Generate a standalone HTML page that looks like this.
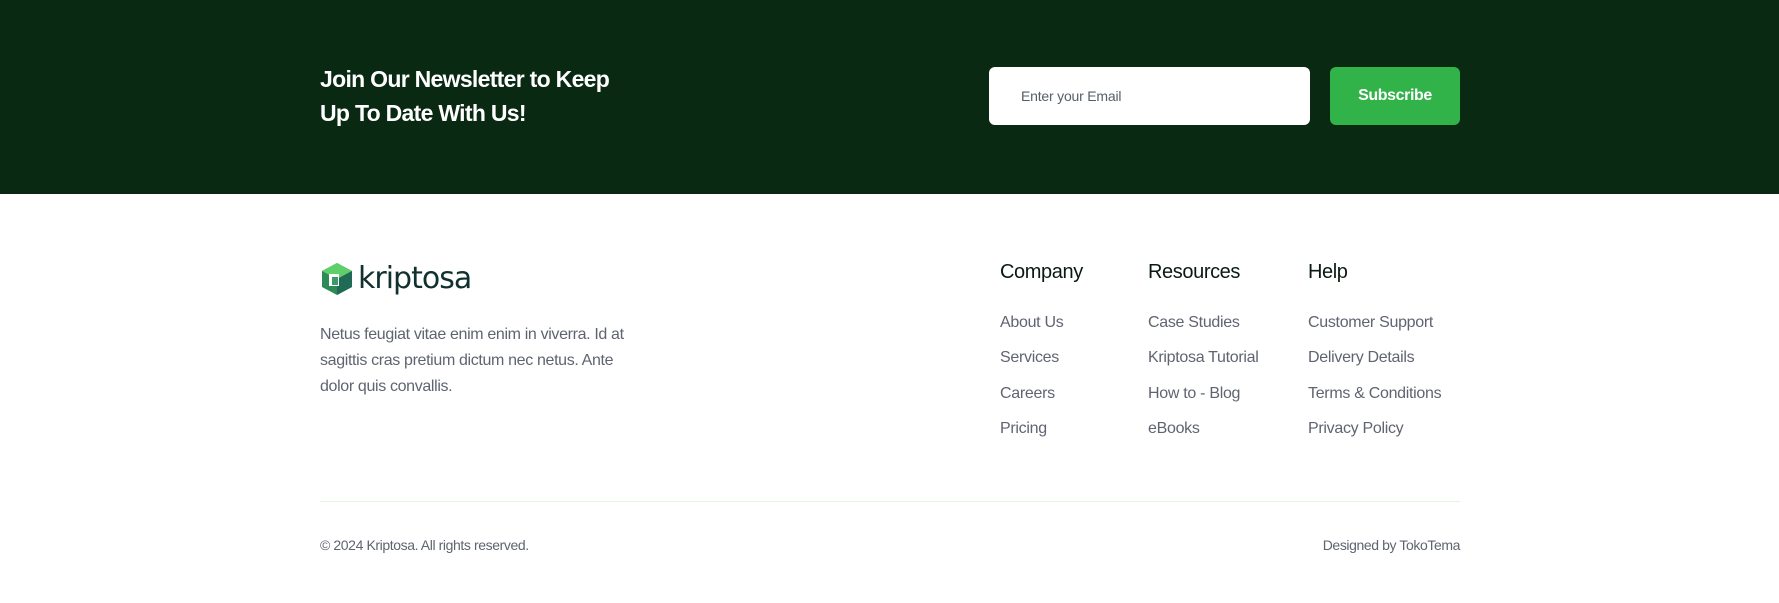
<!DOCTYPE html>
<html><head><meta charset="utf-8"><style>
*{margin:0;padding:0;box-sizing:border-box}
body{width:1779px;height:603px;background:#fff;font-family:"Liberation Sans",sans-serif;position:relative;overflow:hidden}
.band{position:absolute;left:0;top:0;width:1779px;height:194px;background:#0a2913}
.h{position:absolute;left:320px;top:62px;color:#fff;font-size:23px;font-weight:bold;line-height:34px;letter-spacing:-0.7px}
.inp{position:absolute;left:989px;top:67px;width:321px;height:58px;background:#fff;border-radius:6px;color:#555e68;font-size:14px;line-height:58px;padding-left:32px;letter-spacing:-0.2px}
.btn{position:absolute;left:1330px;top:67px;width:130px;height:58px;background:#31b34a;border-radius:6px;color:#fff;font-size:16px;font-weight:bold;line-height:58px;text-align:center;letter-spacing:-0.4px}
.logo{position:absolute;left:320px;top:262px}
.lt{position:absolute;left:358px;top:259px;font-size:30px;color:#10312f;font-family:"DejaVu Sans",sans-serif;letter-spacing:-1px;line-height:40px}
.p{position:absolute;left:320px;top:322px;width:330px;font-size:16px;line-height:26px;color:#5f6470;letter-spacing:-0.35px}
.col{position:absolute;top:259px}
.col h4{font-size:20px;font-weight:normal;color:#0a1a10;line-height:26px;margin-bottom:20px;letter-spacing:-0.4px}
.col a{display:block;font-size:16px;color:#5f6470;line-height:35.3px;text-decoration:none;letter-spacing:-0.3px}
.hr{position:absolute;left:320px;top:501px;width:1140px;height:1px;background:#dff7df}
.b{position:absolute;top:537px;font-size:14px;color:#5f6470;letter-spacing:-0.4px}
</style></head><body>
<div class="band"></div>
<div class="h">Join Our Newsletter to Keep<br>Up To Date With Us!</div>
<div class="inp">Enter your Email</div>
<div class="btn">Subscribe</div>
<svg class="logo" width="34" height="34" viewBox="0 0 34 34"><polygon points="17,1 32,9 32,25 17,33 2,25 2,9" fill="#2e8b57"/><polygon points="17,1 32,9 17,17 2,9" fill="#5fcf6a"/><polygon points="17,17 32,9 32,25 17,33" fill="#1f6b55"/><rect x="9" y="12" width="10" height="12" fill="#fff"/><rect x="12" y="15" width="6" height="8" fill="#3a9a6a"/></svg>
<div class="lt">kriptosa</div>
<div class="p">Netus feugiat vitae enim enim in viverra. Id at sagittis cras pretium dictum nec netus. Ante dolor quis convallis.</div>
<div class="col" style="left:1000px"><h4>Company</h4><a>About Us</a><a>Services</a><a>Careers</a><a>Pricing</a></div>
<div class="col" style="left:1148px"><h4>Resources</h4><a>Case Studies</a><a>Kriptosa Tutorial</a><a>How to - Blog</a><a>eBooks</a></div>
<div class="col" style="left:1308px"><h4>Help</h4><a>Customer Support</a><a>Delivery Details</a><a>Terms &amp; Conditions</a><a>Privacy Policy</a></div>
<div class="hr"></div>
<div class="b" style="left:320px">© 2024 Kriptosa. All rights reserved.</div>
<div class="b" style="right:319px">Designed by TokoTema</div>
</body></html>
